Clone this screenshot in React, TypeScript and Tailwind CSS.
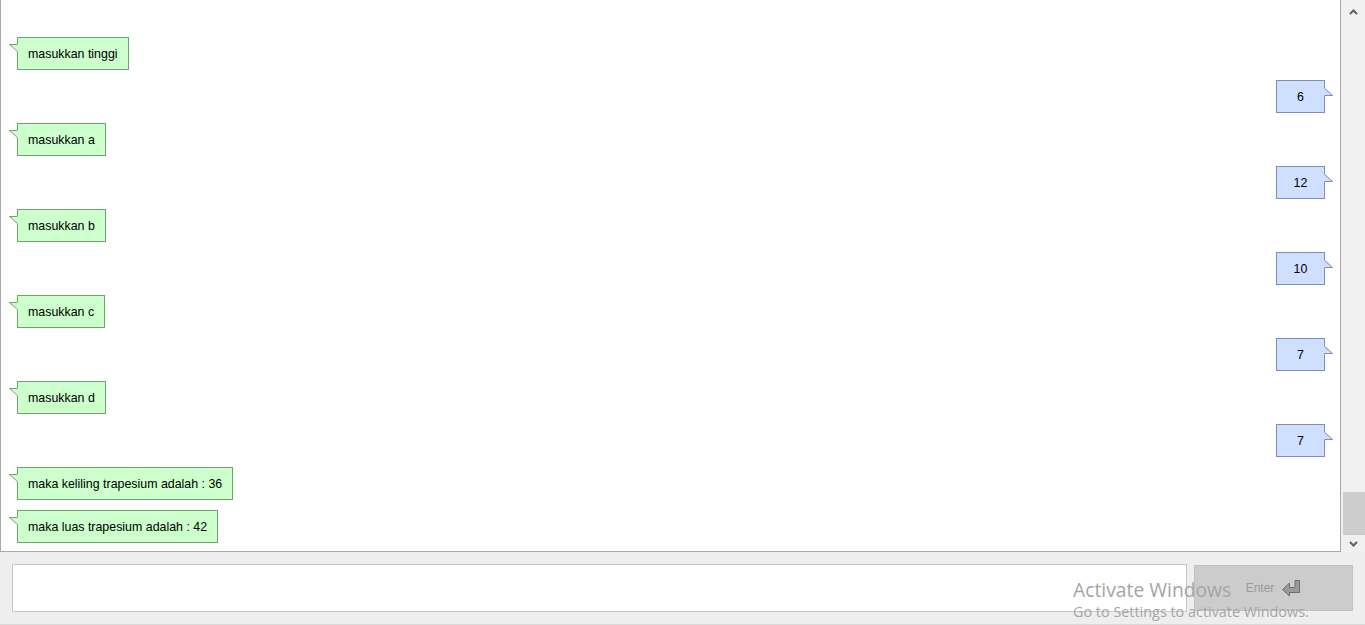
import React from 'react';

type Msg = { side: 'bot' | 'user'; text: string };

const messages: Msg[] = [
    { side: 'bot', text: 'masukkan tinggi' },
    { side: 'user', text: '6' },
    { side: 'bot', text: 'masukkan a' },
    { side: 'user', text: '12' },
    { side: 'bot', text: 'masukkan b' },
    { side: 'user', text: '10' },
    { side: 'bot', text: 'masukkan c' },
    { side: 'user', text: '7' },
    { side: 'bot', text: 'masukkan d' },
    { side: 'user', text: '7' },
    { side: 'bot', text: 'maka keliling trapesium adalah : 36' },
    { side: 'bot', text: 'maka luas trapesium adalah : 42' },
];

function BotBubble({ text }: { text: string }) {
    return (
        <div className="relative self-start ml-[16px] h-[33px] flex items-center px-[10px] pt-[2px] bg-[#ccffcc] border border-[#6fa46f] text-[12.4px] text-black whitespace-nowrap">
            <svg className="absolute left-[-10px] top-[6px]" width="10" height="8" viewBox="0 0 10 8">
                <polygon points="1,0 10,0 10,8" fill="#ccffcc" />
                <polyline points="9.5,0.5 1.5,0.5 9.5,7.5" fill="none" stroke="#6fa46f" strokeWidth="1" />
            </svg>
            {text}
        </div>
    );
}

function UserBubble({ text }: { text: string }) {
    return (
        <div className="relative self-end mr-[15px] h-[33px] min-w-[49px] flex items-center justify-center px-[10px] pt-[2px] bg-[#cfdfff] border border-[#7d8fb8] text-[12.4px] text-black">
            {text}
            <svg className="absolute right-[-10px] top-[7px]" width="10" height="9" viewBox="0 0 10 9">
                <polygon points="0,0 1.5,0 9,7.5 9,8 0,8" fill="#cfdfff" />
                <polyline points="0.5,0.5 8.5,7.5 0.5,7.5" fill="none" stroke="#7d8fb8" strokeWidth="1" />
            </svg>
        </div>
    );
}

export default function App() {
    return (
        <div className="relative w-[1365px] h-[625px] flex flex-col bg-white overflow-hidden" style={{ fontFamily: '"Liberation Sans", Arial, sans-serif' }}>
            <div className="flex h-[552px]">
                <div className="w-[1341px] h-full border-l border-r border-b border-[#a9a9a9] flex flex-col gap-[10px] pt-[37px] overflow-hidden bg-white">
                    {messages.map((m, idx) =>
                        m.side === 'bot' ? <BotBubble key={idx} text={m.text} /> : <UserBubble key={idx} text={m.text} />
                    )}
                </div>
                <div className="flex-1 flex flex-col bg-[#f0f0f0]">
                    <div className="h-[17px] flex items-center justify-center pt-[6px]">
                        <svg width="9" height="6" viewBox="0 0 9 6">
                            <polyline points="1,5 4.5,1.5 8,5" fill="none" stroke="#606060" strokeWidth="2" />
                        </svg>
                    </div>
                    <div className="flex-1 flex flex-col justify-end">
                        <div className="h-[43px] ml-[2px] bg-[#cdcdcd]" />
                    </div>
                    <div className="h-[17px] flex items-center justify-center">
                        <svg width="9" height="6" viewBox="0 0 9 6">
                            <polyline points="1,1 4.5,4.5 8,1" fill="none" stroke="#606060" strokeWidth="2" />
                        </svg>
                    </div>
                </div>
            </div>

            <div className="flex h-[73px] gap-[7px] px-[12px] pt-[12px] bg-[#eeeeee] border-b border-[#d9d9d9]">
                <div className="flex-1 h-[48px] bg-white border border-[#c8c8c8]" />
                <div className="w-[159px] h-[46px] mt-[1px] bg-[#cccccc] border border-[#c2c2c2] flex items-center justify-center gap-[7px]">
                    <span className="text-[12px] text-[#9b9b9b]">Enter</span>
                    <svg width="20" height="18" viewBox="0 0 20 18">
                        <path d="M14 1.5 H18.5 V13.5 H8.5 V17 L1.5 10.5 L8.5 4 V8.5 H14 Z" fill="#9a9a9a" stroke="#6e6e6e" strokeWidth="1" />
                    </svg>
                </div>
            </div>

            <div className="absolute left-[1073px] top-[580px] text-[#a5a5a5] pointer-events-none leading-none" style={{ fontFamily: '"Open Sans", "Noto Sans", sans-serif' }}>
                <div className="text-[19.3px]">Activate Windows</div>
                <div className="text-[14.4px] mt-[6px]">Go to Settings to activate Windows.</div>
            </div>
        </div>
    );
}
